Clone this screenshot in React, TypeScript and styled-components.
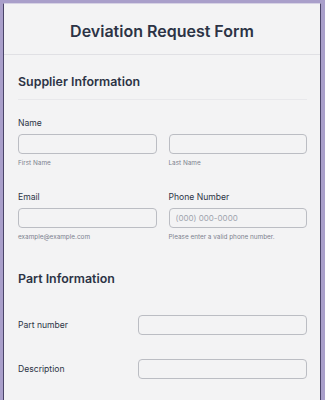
import React from 'react'
import styled, { createGlobalStyle } from 'styled-components'

const GlobalStyle = createGlobalStyle`
    html, body {
        margin: 0;
        padding: 0;
        background: #a99fca;
        font-family: Inter, "Noto Sans", sans-serif;
        color: #2c3345;
    }
`

const Page = styled.div`
    padding: 3px 4px 0 3px;
    height: 400px;
    box-sizing: border-box;
    overflow: hidden;
`

const Card = styled.div`
    background: #f3f3f4;
    border-left: 1.5px solid #4a4468;
    border-right: 1.5px solid #4a4468;
    border-top: 1px solid #d6d2e4;
    height: 420px;
    box-sizing: border-box;
`

const TitleBar = styled.div`
    padding: 17px 0 13px;
    border-bottom: 1px solid #e0e0e4;
    text-align: center;
`

const Title = styled.h1`
    margin: 0;
    font-size: 16px;
    line-height: 20px;
    font-weight: 600;
    color: #2c3345;
`

const Body = styled.div`
    padding: 0 13px 0 14px;
`

const SectionHeader = styled.div<{ $top: number; $divider?: boolean }>`
    margin-top: ${(p) => p.$top}px;
    padding-bottom: ${(p) => (p.$divider ? 8 : 0)}px;
    border-bottom: ${(p) => (p.$divider ? '1px solid #e8e8eb' : 'none')};
`

const SectionTitle = styled.h2`
    margin: 0;
    font-size: 12.4px;
    line-height: 18px;
    font-weight: 600;
    color: #2c3345;
`

const TwoCol = styled.div<{ $top: number }>`
    display: grid;
    grid-template-columns: 1fr 1fr;
    column-gap: 12px;
    margin-top: ${(p) => p.$top}px;
`

const Field = styled.div`
    display: flex;
    flex-direction: column;
`

const Label = styled.label`
    font-size: 8.6px;
    line-height: 12px;
    font-weight: 400;
    color: #2c3345;
    margin-bottom: 5px;
`

const Input = styled.input`
    box-sizing: border-box;
    height: 20px;
    width: 100%;
    border: 1px solid #bbbdc3;
    border-radius: 4px;
    background: #f3f3f4;
    padding: 0 6px;
    font-family: inherit;
    font-size: 8px;
    color: #2c3345;
    outline: none;

    &::placeholder {
        color: #a0a4ae;
    }
`

const SubLabel = styled.span`
    margin-top: 5px;
    font-size: 6.4px;
    line-height: 9px;
    color: #7d828f;
`

const InlineRow = styled.div<{ $top: number }>`
    display: grid;
    grid-template-columns: 120px 1fr;
    align-items: center;
    margin-top: ${(p) => p.$top}px;
`

const InlineLabel = styled.label`
    font-size: 8.6px;
    line-height: 12px;
    font-weight: 400;
    color: #2c3345;
`

export default function App() {
    return (
        <>
            <GlobalStyle />
            <Page>
                <Card>
                    <TitleBar>
                        <Title>Deviation Request Form</Title>
                    </TitleBar>
                    <Body>
                        <SectionHeader $top={18} $divider>
                            <SectionTitle>Supplier Information</SectionTitle>
                        </SectionHeader>

                        <TwoCol $top={17}>
                            <Field>
                                <Label>Name</Label>
                                <Input />
                                <SubLabel>First Name</SubLabel>
                            </Field>
                            <Field>
                                <Label>&nbsp;</Label>
                                <Input />
                                <SubLabel>Last Name</SubLabel>
                            </Field>
                        </TwoCol>

                        <TwoCol $top={23}>
                            <Field>
                                <Label>Email</Label>
                                <Input />
                                <SubLabel>example@example.com</SubLabel>
                            </Field>
                            <Field>
                                <Label>Phone Number</Label>
                                <Input placeholder="(000) 000-0000" />
                                <SubLabel>Please enter a valid phone number.</SubLabel>
                            </Field>
                        </TwoCol>

                        <SectionHeader $top={28}>
                            <SectionTitle>Part Information</SectionTitle>
                        </SectionHeader>

                        <InlineRow $top={27}>
                            <InlineLabel>Part number</InlineLabel>
                            <Input />
                        </InlineRow>
                        <InlineRow $top={24}>
                            <InlineLabel>Description</InlineLabel>
                            <Input />
                        </InlineRow>
                    </Body>
                </Card>
            </Page>
        </>
    )
}
